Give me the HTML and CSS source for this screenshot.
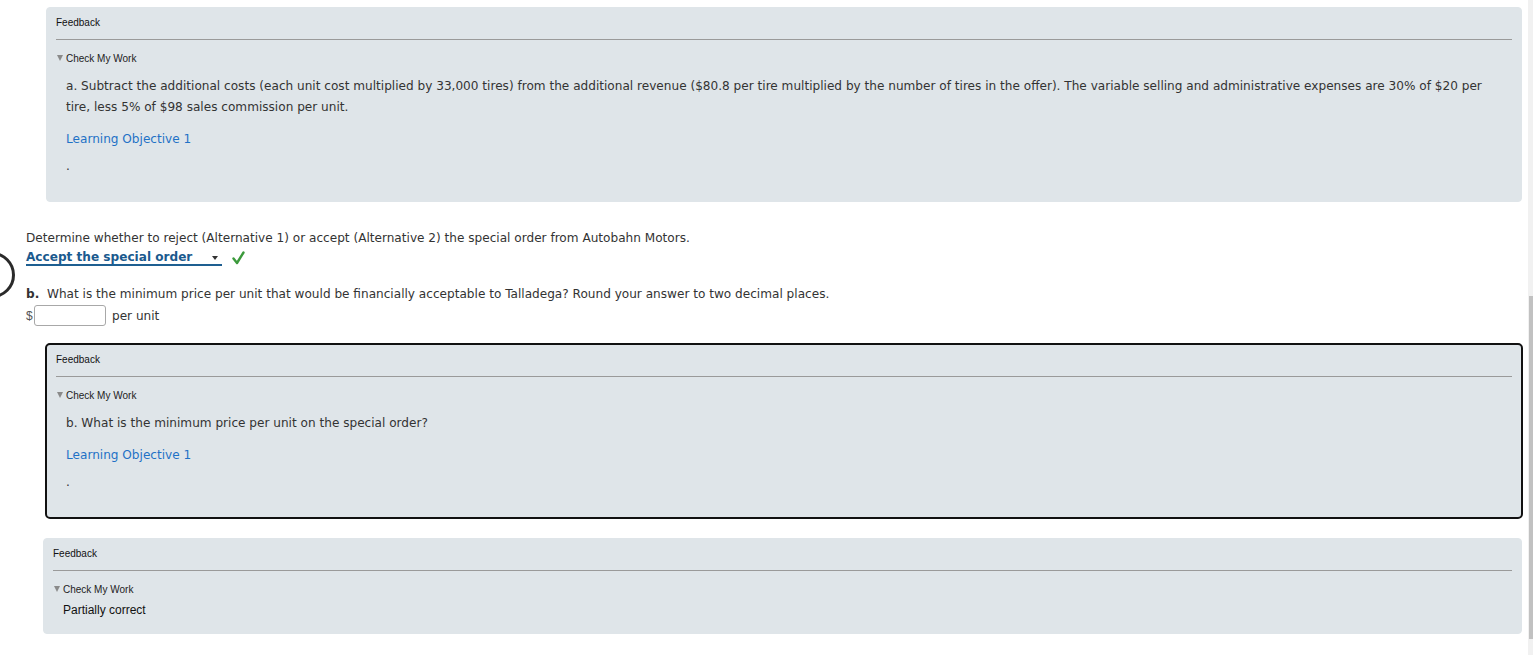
FILE: index.html
```html
<!DOCTYPE html>
<html>
<head>
<meta charset="utf-8">
<link rel="stylesheet" href="styles.css">
</head>
<body>
<div class="page">
  <div class="fb fb-a">
    <div class="fb-head">Feedback</div>
    <div class="cmw"><span class="tri"></span>Check My Work</div>
    <div class="fb-body">
      <p class="fb-text">a. Subtract the additional costs (each unit cost multiplied by 33,000 tires) from the additional revenue ($80.8 per tire multiplied by the number of tires in the offer). The variable selling and administrative expenses are 30% of $20 per tire, less 5% of $98 sales commission per unit.</p>
      <p class="lo">Learning Objective 1</p>
      <p class="dot">.</p>
    </div>
  </div>

  <div class="question">Determine whether to reject (Alternative 1) or accept (Alternative 2) the special order from Autobahn Motors.</div>
  <div class="answer-row">
    <div class="select">Accept the special order<span class="caret"></span></div>
    <svg class="check" width="13" height="14" viewBox="0 0 13 14"><path d="M1.5 7.5 L5 12 L11.5 1.5" fill="none" stroke="#3c9a3c" stroke-width="2.4" stroke-linecap="round" stroke-linejoin="round"/></svg>
  </div>

  <div class="question qb"><b>b.</b>&nbsp; What is the minimum price per unit that would be financially acceptable to Talladega? Round your answer to two decimal places.</div>
  <div class="input-row"><span class="dollar">$</span><span class="inp"></span><span class="unit">per unit</span></div>

  <div class="fb fb-b">
    <div class="fb-head">Feedback</div>
    <div class="cmw"><span class="tri"></span>Check My Work</div>
    <div class="fb-body">
      <p class="fb-text">b. What is the minimum price per unit on the special order?</p>
      <p class="lo">Learning Objective 1</p>
      <p class="dot">.</p>
    </div>
  </div>

  <div class="fb fb-c">
    <div class="fb-head">Feedback</div>
    <div class="cmw"><span class="tri"></span>Check My Work</div>
    <div class="fb-body">
      <p class="partial">Partially correct</p>
    </div>
  </div>
</div>
<div class="ring"></div>
<div class="scrollbar"><div class="thumb"></div></div>
</body>
</html>
```

FILE: styles.css
```css
html, body {
  margin: 0;
  padding: 0;
  background: #ffffff;
}
body {
  font-family: "DejaVu Sans", Verdana, sans-serif;
  font-size: 12.1px;
  color: #333333;
  width: 1533px;
  height: 655px;
  overflow: hidden;
  position: relative;
}
.page {
  padding: 7px 11px 0 26px;
}
.fb {
  background: #dfe5e9;
  border: 1px solid #dfe5e9;
  border-radius: 4px;
  padding: 9px 9px 0 9px;
  margin-left: 20px;
}
.fb-head {
  font-family: "Liberation Sans", Arial, sans-serif;
  font-size: 10px;
  line-height: 12px;
  color: #111;
  padding-bottom: 10px;
  border-bottom: 1px solid #9a9a9a;
}
.cmw {
  font-family: "Liberation Sans", Arial, sans-serif;
  font-size: 10px;
  line-height: 12px;
  color: #222;
  margin-top: 13px;
  display: flex;
  align-items: center;
}
.tri {
  width: 0;
  height: 0;
  border-left: 3px solid transparent;
  border-right: 3px solid transparent;
  border-top: 6px solid #8a8a8a;
  margin: 0 3px 2px 1px;
}
.fb-body {
  padding-left: 10px;
}
.fb-body p {
  margin: 0;
}
.fb-text {
  line-height: 21px;
  margin-top: 11px !important;
  padding-right: 16px;
  color: #333;
}
.lo {
  line-height: 21px;
  color: #1f72c6;
  margin-top: 11px !important;
}
.dot {
  line-height: 21px;
  margin-top: 6px !important;
  padding-bottom: 24px;
}
.fb-b {
  border: 2px solid #111;
  border-radius: 5px;
  margin-left: 19px;
  margin-right: -1px;
  margin-top: 17px;
}
.fb-c {
  margin-left: 17px;
  margin-top: 19px;
}
.partial {
  font-family: "Liberation Sans", Arial, sans-serif;
  font-size: 12px;
  line-height: 14px;
  color: #111;
  margin-top: 7px !important;
  padding-bottom: 16px;
  margin-left: -10px !important;
  padding-left: 10px;
}
.question {
  margin-top: 26px;
  line-height: 20px;
  color: #333;
}
.answer-row {
  display: flex;
  align-items: center;
  margin-top: 1px;
}
.select {
  width: 196px;
  height: 14px;
  padding-top: 1px;
  border-bottom: 2px solid #1e5f91;
  font-weight: bold;
  color: #1b5a8e;
  line-height: 14px;
  position: relative;
  white-space: nowrap;
}
.caret {
  position: absolute;
  right: 4px;
  top: 7px;
  width: 0;
  height: 0;
  border-left: 3px solid transparent;
  border-right: 3px solid transparent;
  border-top: 4px solid #333;
}
.check {
  margin-left: 10px;
}
.qb {
  margin-top: 18px;
}
.input-row {
  display: flex;
  align-items: center;
  margin-top: 1px;
}
.dollar {
  font-family: "Liberation Sans", Arial, sans-serif;
  font-size: 12px;
  color: #555;
  width: 8px;
}
.inp {
  width: 70px;
  height: 19px;
  border: 1px solid #a8a8a8;
  border-radius: 3px;
  background: #fff;
}
.unit {
  margin-left: 6px;
}
.ring {
  position: absolute;
  left: -31px;
  top: 252px;
  width: 40px;
  height: 40px;
  border: 3px solid #2a2a2a;
  border-radius: 50%;
}
.scrollbar {
  position: absolute;
  right: 0;
  top: 0;
  width: 5px;
  height: 655px;
  background: #f1f1f1;
}
.thumb {
  position: absolute;
  left: 1px;
  right: 0;
  top: 296px;
  height: 343px;
  background: #c1c1c1;
}
```
